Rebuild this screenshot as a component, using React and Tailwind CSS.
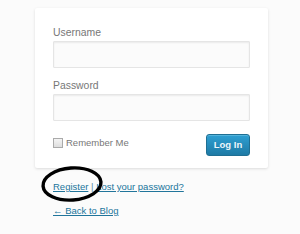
export default function App() {
  const font = { fontFamily: '"Liberation Sans", Arial, sans-serif' };
  return (
    <div className="relative w-[300px] h-[234px] bg-[#fbfbfb] overflow-hidden" style={font}>
      <div className="ml-[35px] w-[233px] pt-[8px]">
        <div className="bg-white shadow-[0_1px_3px_rgba(0,0,0,0.13)] rounded-[2px] px-[18px] pt-[19px] pb-[12px]">
          <div className="text-[10.4px] leading-[12px] text-[#777]">Username</div>
          <div className="mt-[2px] h-[27px] border border-[#e5e5e5] bg-[#fbfbfb] rounded-[1px] shadow-[inset_0_1px_2px_rgba(0,0,0,0.07)]" />
          <div className="mt-[12px] text-[10.4px] leading-[12px] text-[#777]">Password</div>
          <div className="mt-[2px] h-[27px] border border-[#e5e5e5] bg-[#fbfbfb] rounded-[1px] shadow-[inset_0_1px_2px_rgba(0,0,0,0.07)]" />
          <div className="mt-[13px] flex items-start justify-between">
            <div className="flex items-center gap-[3px] mt-[3px]">
              <div className="w-[10px] h-[10px] border border-[#aaa] bg-gradient-to-b from-[#f4f4f4] to-[#dedede]" />
              <span className="text-[9.5px] leading-[12px] text-[#777]">Remember Me</span>
            </div>
            <div className="w-[44px] h-[22px] rounded-[3px] border border-[#1f6f93] bg-gradient-to-b from-[#2e9fd2] to-[#1e7aa5] flex items-center justify-center text-[#eef6fa] text-[9.5px] font-semibold shadow-[inset_0_1px_0_rgba(120,200,230,0.5)]">
              Log In
            </div>
          </div>
        </div>
        <div className="px-[18px] mt-[13px] text-[9.5px] leading-[12px]">
          <div className="text-[#21759b]">
            <span className="underline">Register</span> <span className="text-[#5a8aa3]">|</span> <span className="underline">Lost your password?</span>
          </div>
          <div className="mt-[12px] text-[#21759b] underline">← Back to Blog</div>
        </div>
      </div>
      <svg className="absolute left-0 top-0" width="300" height="234" viewBox="0 0 300 234">
        <ellipse cx="72" cy="184" rx="29" ry="16" fill="none" stroke="#000" strokeWidth="3.4" transform="rotate(-4 72 184)" />
      </svg>
    </div>
  );
}
